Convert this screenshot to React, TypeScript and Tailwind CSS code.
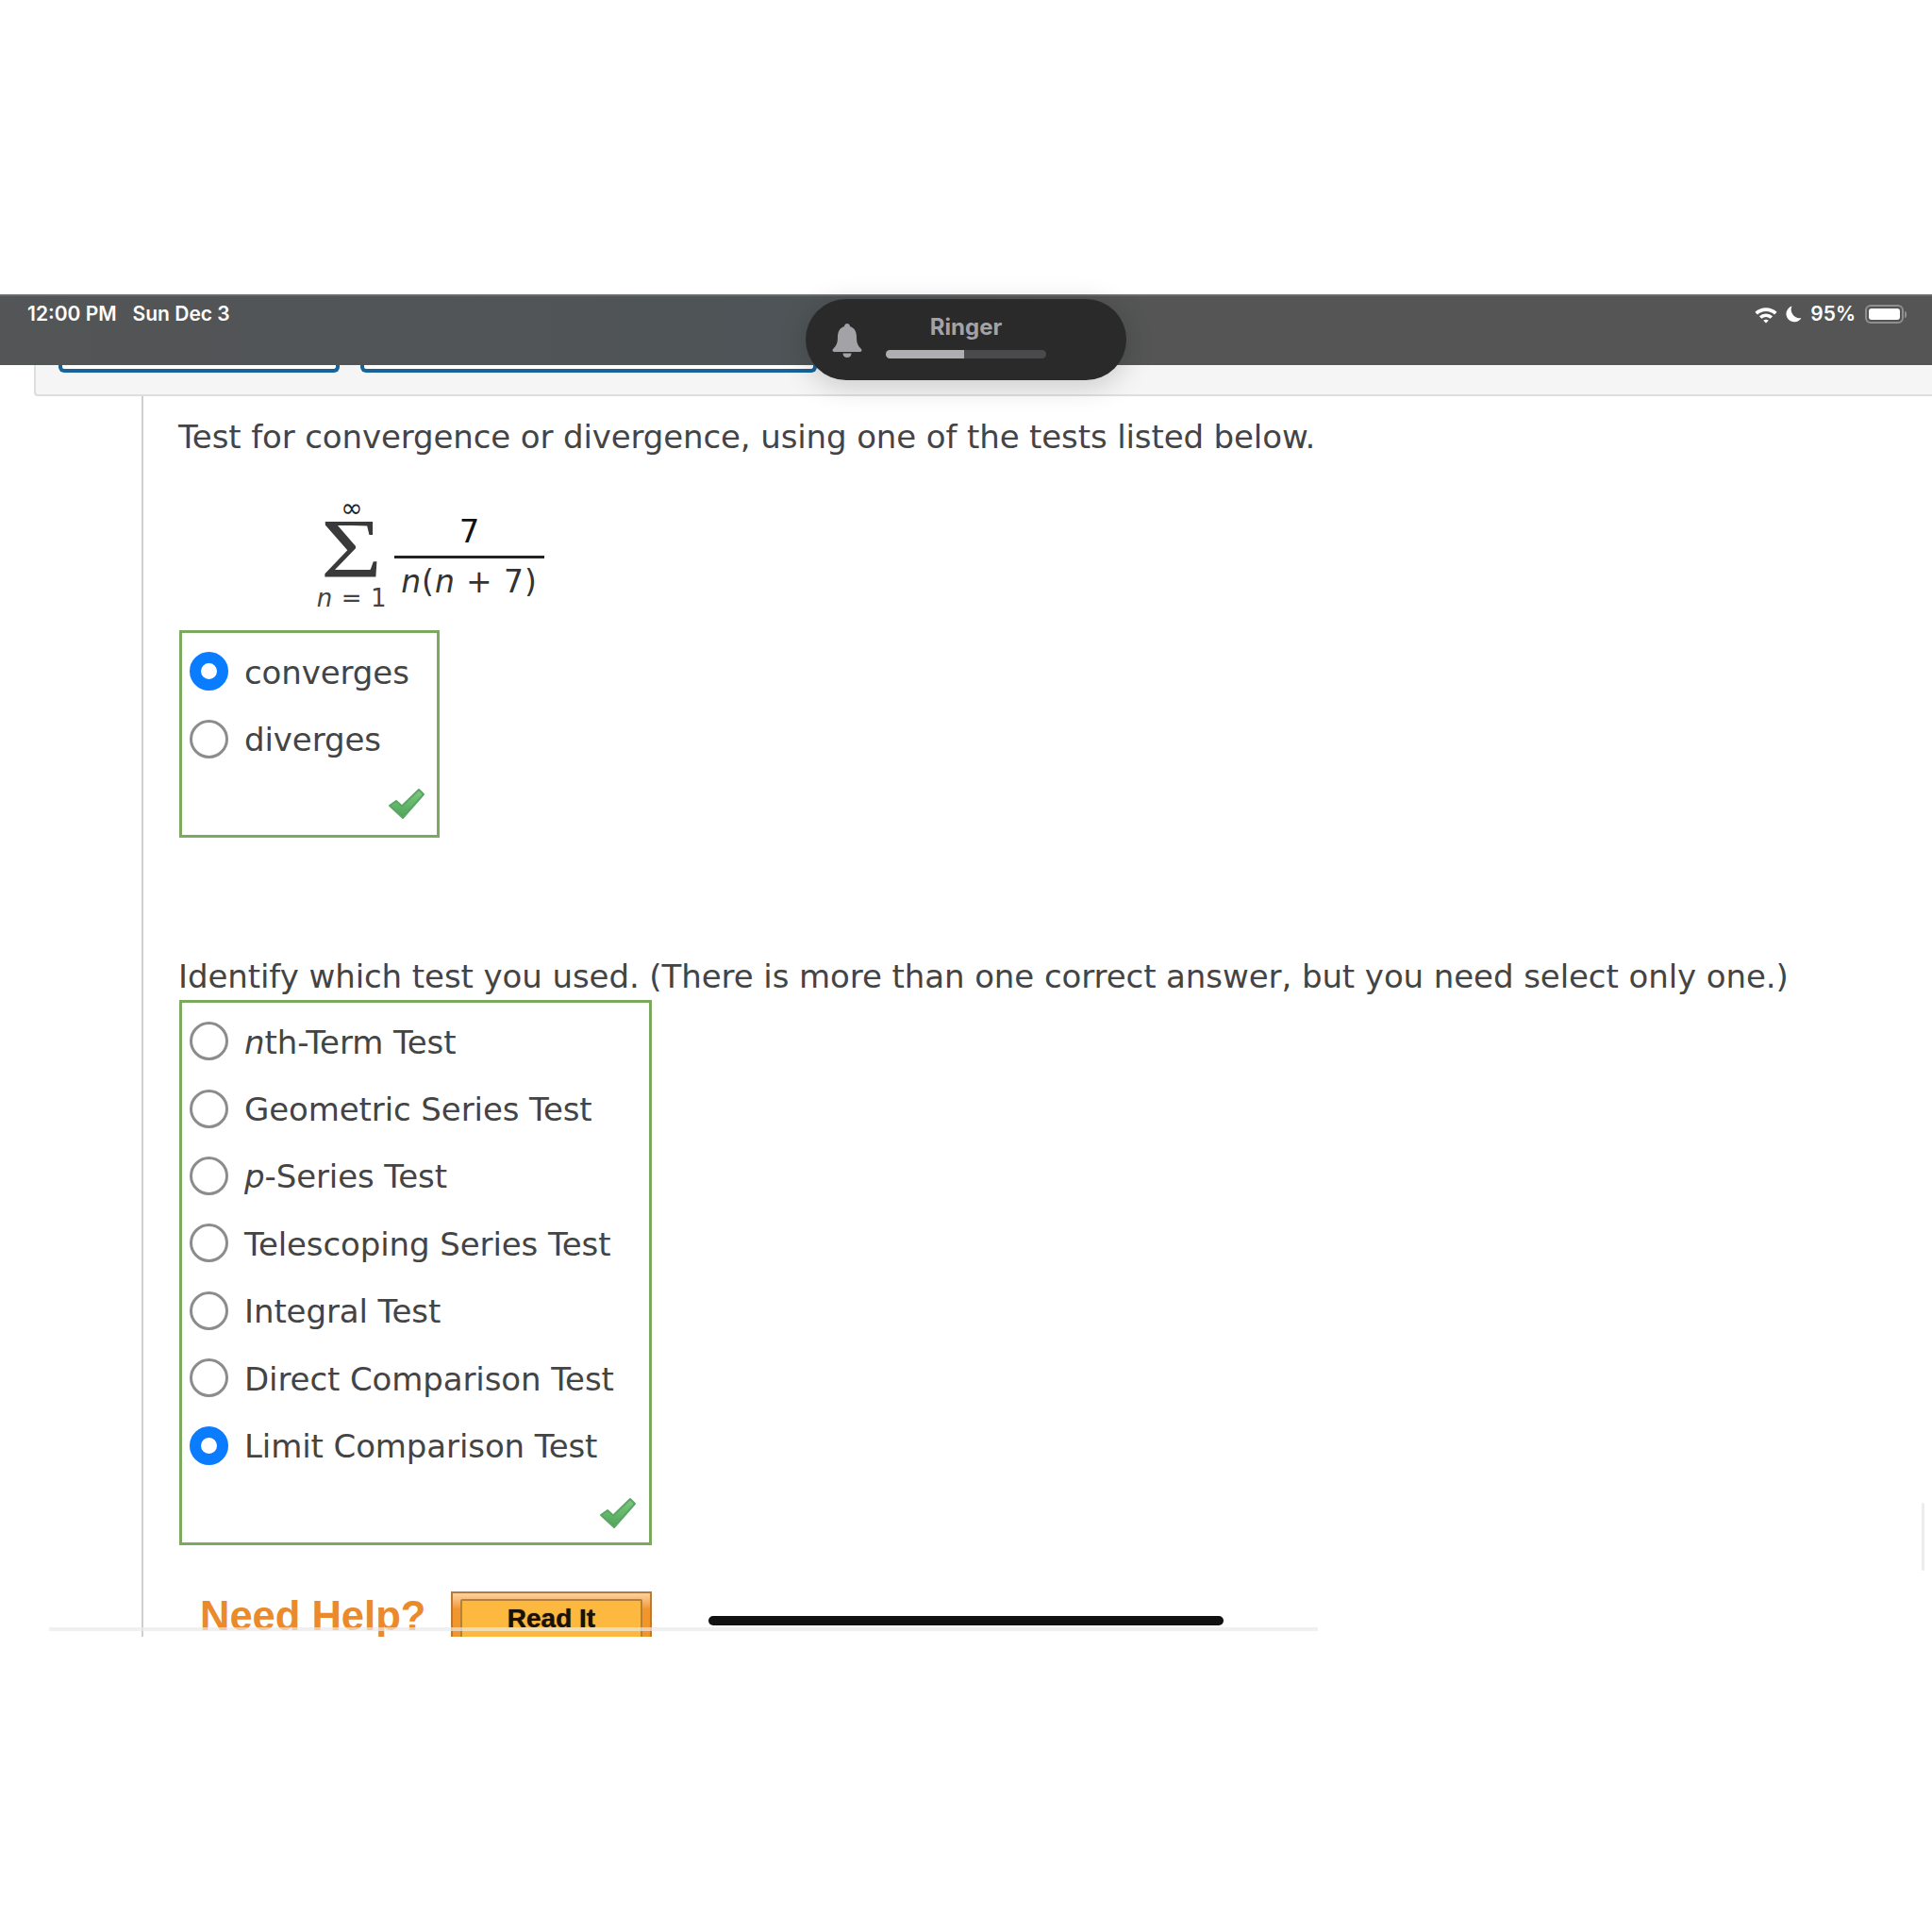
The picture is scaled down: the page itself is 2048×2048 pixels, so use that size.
const Radio = ({ label, checked = false }: { label: React.ReactNode; checked?: boolean }) => (
  <div className="flex h-[71.4px] items-center pl-[8px]">
    <span
      className={`h-[41px] w-[41px] shrink-0 rounded-full ${
        checked ? 'border-[12px] border-[#0a7cff] bg-white' : 'border-[3.5px] border-[#8c8c8c] bg-white'
      }`}
    />
    <span className="ml-[17px] pt-[3px] text-[34px] tracking-[-0.1px] text-[#444]">{label}</span>
  </div>
);

const Check = () => (
  <svg width="40" height="34" viewBox="0 0 40 34" className="block">
    <defs>
      <linearGradient id="chk" x1="0" y1="0" x2="0" y2="1">
        <stop offset="0" stopColor="#7fc97f" />
        <stop offset="1" stopColor="#4fa35a" />
      </linearGradient>
    </defs>
    <path d="M2 19 L9 14 L15 19.5 L33 2 L38 7 L16 32 Z" fill="url(#chk)" stroke="#5aa764" strokeWidth="2" strokeLinejoin="round" />
  </svg>
);

const App = () => {
  return (
    <div
      className="relative flex h-[2048px] w-[2048px] flex-col overflow-hidden bg-white pt-[312px]"
      style={{ fontFamily: '"DejaVu Sans", sans-serif' }}
    >
      {/* status bar */}
      <div
        className="flex h-[75px] shrink-0 items-start justify-between border-t-[2px] border-[#6a6a6a] bg-gradient-to-r from-[#535556] via-[#4f5458] via-40% to-[#555555] to-60% pl-[29px] pr-[27px] pt-[6px] text-white"
        style={{ fontFamily: 'Inter, sans-serif' }}
      >
        <div className="flex gap-[17px] text-[21px] font-semibold leading-[26px]">
          <span>12:00 PM</span>
          <span>Sun Dec 3</span>
        </div>
        <div className="flex items-center">
          <svg width="26" height="19" viewBox="0 0 24 18" className="mr-[8px]">
            <path d="M1 6.5 A16 16 0 0 1 23 6.5 L20.6 9 A12.6 12.6 0 0 0 3.4 9 Z" fill="white" />
            <path d="M5.2 10.7 A10.4 10.4 0 0 1 18.8 10.7 L16.4 13.1 A7 7 0 0 0 7.6 13.1 Z" fill="white" />
            <path d="M9.4 14.9 A4.2 4.2 0 0 1 14.6 14.9 L12 17.6 Z" fill="white" />
          </svg>
          <svg width="17" height="18" viewBox="0 0 17 18" className="mr-[9px]">
            <path d="M6.5 0.5 A9 9 0 0 0 16.5 13 A8.6 8.6 0 1 1 6.5 0.5 Z" fill="white" />
          </svg>
          <span className="mr-[10px] text-[21px] font-semibold leading-[26px]">95%</span>
          <div className="flex h-[20px] w-[41px] rounded-[6px] border-[2px] border-[#8f8f8f] p-[2px]">
            <div className="h-full w-full rounded-[3px] bg-white" />
          </div>
          <div className="ml-[1px] h-[7px] w-[2px] rounded-r bg-[#8f8f8f]" />
        </div>
      </div>

      {/* page header panel, tabs run under the status bar */}
      <div className="ml-[36px] flex h-[33px] shrink-0 gap-[22px] rounded-bl-[4px] border-b-[2px] border-l-[2px] border-[#dedede] bg-[#f5f5f5] pl-[24px]">
        <div className="h-[8px] w-[298px] rounded-b-[6px] border-x-[4px] border-b-[4px] border-[#17639c] bg-white" />
        <div className="h-[8px] w-[484px] rounded-b-[6px] border-x-[4px] border-b-[4px] border-[#17639c] bg-white" />
      </div>

      {/* question */}
      <div className="ml-[150px] h-[1315px] shrink-0 overflow-hidden border-l-[2px] border-[#cfcfcf] pl-[37px]">
        <p className="mt-[18px] h-[50px] text-[34px] leading-[50px] tracking-[-0.12px] text-[#444]">
          Test for convergence or divergence, using one of the tests listed below.
        </p>

        <div className="mt-[39px] flex h-[141px] pl-[148px] text-[#222]">
          <div className="flex w-[72px] flex-col items-center">
            <span className="h-[24px] text-[28px] leading-[24px]">∞</span>
            <span
              className="inline-block h-[62px] scale-x-[1.27] text-[88px] leading-[62px] text-[#3a3a3a]"
              style={{ fontFamily: '"Liberation Serif", serif' }}
            >
              Σ
            </span>
            <span className="mt-[7px] h-[28px] whitespace-nowrap text-[26px] leading-[28px] tracking-[0.6px] text-[#444]">
              <i>n</i> = 1
            </span>
          </div>
          <div className="ml-[9px] flex w-[159px] flex-col items-center">
            <span className="h-[50px] pt-[15px] text-[34px] leading-[42px] text-[#111]">7</span>
            <div className="mt-[12px] h-[3px] w-full bg-[#222]" />
            <span className="whitespace-nowrap text-[33px] leading-[50px] tracking-[0.9px] text-[#333]">
              <i>n</i>(<i>n</i> + 7)
            </span>
          </div>
        </div>

        <div className="ml-[1px] flex h-[220px] w-[276px] flex-col border-[3px] border-[#7aa95f] pt-[5px]">
          <Radio label="converges" checked />
          <Radio label="diverges" />
          <div className="mt-auto flex justify-end pb-[16px] pr-[12px]">
            <Check />
          </div>
        </div>

        <p className="mt-[122px] h-[50px] text-[34px] leading-[50px] tracking-[-0.08px] text-[#444]">
          Identify which test you used. (There is more than one correct answer, but you need select only one.)
        </p>

        <div className="ml-[1px] flex h-[578px] w-[501px] flex-col border-[3px] border-[#7aa95f] pt-[5px]">
          <Radio label={<><i>n</i>th-Term Test</>} />
          <Radio label="Geometric Series Test" />
          <Radio label={<><i>p</i>-Series Test</>} />
          <Radio label="Telescoping Series Test" />
          <Radio label="Integral Test" />
          <Radio label="Direct Comparison Test" />
          <Radio label="Limit Comparison Test" checked />
          <div className="mt-auto flex justify-end pb-[14px] pr-[13px]">
            <Check />
          </div>
        </div>

        <div className="mt-[49px] flex h-[60px] items-start" style={{ fontFamily: '"Liberation Sans", sans-serif' }}>
          <span className="ml-[23px] mt-[1px] w-[266px] text-[43.5px] font-bold leading-[50px] text-[#ea8a2a]">Need Help?</span>
          <div className="h-[60px] w-[213px] border-[2px] border-[#b57a3c] bg-gradient-to-b from-[#fbd3a0] to-[#f2952d] to-30% px-[8px] pt-[6px]">
            <div className="flex h-[48px] items-start justify-center rounded-[2px] border-[2px] border-[#b5803a] bg-[#fdb840] pt-[3px] text-[28px] font-bold leading-[32px] text-[#1a1208] [text-shadow:0_0_1px_#3a2a10]">
              Read It
            </div>
          </div>
        </div>
      </div>

      {/* ringer HUD */}
      <div className="absolute left-[854px] top-[317px] flex h-[86px] w-[340px] items-center rounded-[43px] bg-[#2a2a2a] pl-[28px] shadow-[0_6px_30px_rgba(0,0,0,0.18)]">
        <svg width="32" height="36" viewBox="0 0 32 36" className="mt-[2px]">
          <path
            d="M16 0 C18 0 19 1.5 19 3 C24 4.5 26 9 26 14 C26 20 27 23 31 27 C32 28.5 31.5 30 29.5 30 L2.5 30 C0.5 30 0 28.5 1 27 C5 23 6 20 6 14 C6 9 8 4.5 13 3 C13 1.5 14 0 16 0 Z"
            fill="#a2a2a7"
          />
          <path d="M11.5 31.5 L20.5 31.5 C20.5 34.5 18.5 36 16 36 C13.5 36 11.5 34.5 11.5 31.5 Z" fill="#a2a2a7" />
        </svg>
        <div className="ml-[25px] mt-[-9px] flex w-[170px] flex-col items-center">
          <span className="text-[24px] font-bold leading-[30px] text-[#a2a2a7]" style={{ fontFamily: 'Inter, sans-serif' }}>
            Ringer
          </span>
          <div className="mt-[9px] flex h-[9px] w-full overflow-hidden rounded-full bg-[#4a4a4c]">
            <div className="h-full w-[83px] bg-[#aeaeb3]" />
          </div>
        </div>
      </div>

      {/* home indicator and the toolbar line behind it */}
      <div className="absolute left-[52px] top-[1725px] h-[4px] w-[1345px] bg-[#e9e9e9]/70" />
      <div className="absolute left-[751px] top-[1713px] h-[10px] w-[546px] rounded-full bg-[#111]" />
      <div className="absolute left-[2037px] top-[1593px] h-[72px] w-[3px] rounded-full bg-[#ececec]" />
    </div>
  );
};

export default App;
